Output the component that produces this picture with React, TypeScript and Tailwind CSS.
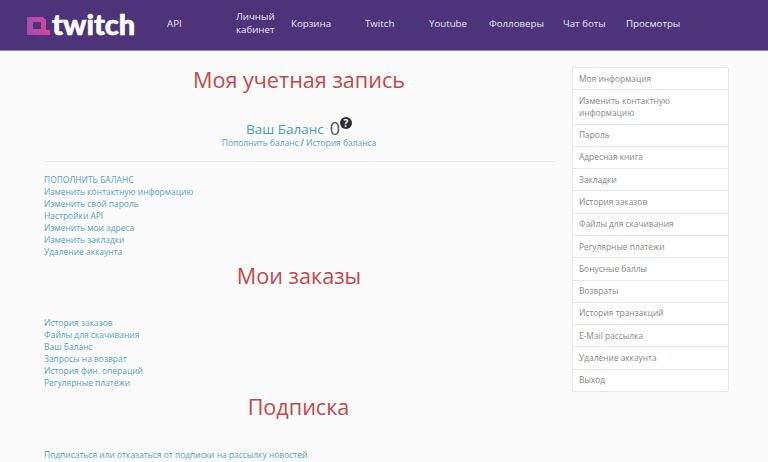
const OPEN = "font-['Open_Sans',sans-serif]";

const nav = [
  { t: 'API', w: 'w-[69px]' },
  { t: 'Личный кабинет', w: 'w-[55px]' },
  { t: 'Корзина', w: 'w-[74px]' },
  { t: 'Twitch', w: 'w-[64px]' },
  { t: 'Youtube', w: 'w-[60px]' },
  { t: 'Фолловеры', w: 'w-[74px]' },
  { t: 'Чат боты', w: 'w-[63px]' },
  { t: 'Просмотры', w: 'w-[64px]' },
];

const side = [
  'Моя информация',
  'Изменить контактную информацию',
  'Пароль',
  'Адресная книга',
  'Закладки',
  'История заказов',
  'Файлы для скачивания',
  'Регулярные платежи',
  'Бонусные баллы',
  'Возвраты',
  'История транзакций',
  'E-Mail рассылка',
  'Удаление аккаунта',
  'Выход',
];

const links1 = ['ПОПОЛНИТЬ БАЛАНС', 'Изменить контактную информацию', 'Изменить свой пароль', 'Настройки API', 'Изменить мои адреса', 'Изменить закладки', 'Удаление аккаунта'];
const links2 = ['История заказов', 'Файлы для скачивания', 'Ваш Баланс', 'Запросы на возврат', 'История фин. операций', 'Регулярные платежи'];

function Logo() {
  return (
    <svg width="26" height="30" viewBox="0 0 26 30" className="block">
      <defs>
        <linearGradient id="lg" x1="0" x2="1" y1="0" y2="0">
          <stop offset="0" stopColor="#a04fb0" />
          <stop offset="1" stopColor="#e0409a" />
        </linearGradient>
      </defs>
      <path fillRule="evenodd" d="M2 7h16l3 3v10h4v5H2zM8 12v7h8v-7z" fill="url(#lg)" />
    </svg>
  );
}

function Links({ items }: { items: string[] }) {
  return (
    <ul className="text-[8.45px] leading-[12px] text-[#55a3c0]">
      {items.map((l) => (
        <li key={l}>{l}</li>
      ))}
    </ul>
  );
}

export default function App() {
  return (
    <div className={`h-[462px] w-[768px] overflow-hidden bg-[#fbfbfb] ${OPEN}`}>
      <header className="flex h-[51px] items-center border-b border-[#8f82a8] bg-[#4c337a]">
        <div className="ml-[25px] flex w-[142px] shrink-0 items-center">
          <Logo />
          <span className="ml-[1px] pb-[2px] font-['Lato',sans-serif] text-[29px] font-black leading-[30px] text-white [-webkit-text-stroke:0.6px_white]">twitch</span>
        </div>
        <nav className="flex items-center pb-[4px] text-[9.7px] leading-[13px] text-[#ebe6f2]">
          {nav.map((n) => (
            <div key={n.t} className={`${n.w} shrink-0`}>{n.t}</div>
          ))}
        </nav>
      </header>
      <div className="flex">
        <main className="ml-[44px] w-[512px] shrink-0">
          <h1 className="mt-[14px] pr-[2px] text-center text-[21.6px] leading-[30px] text-[#c2494b]">Моя учетная запись</h1>
          <div className="mt-[20px] flex h-[22px] items-start justify-center pr-[2px]">
            <span className="mt-[5px] text-[13.5px] leading-[18px] text-[#4a9bb8]">Ваш Баланс</span>
            <span className="mt-[10px] ml-[2px] mr-[2px] text-[6px] leading-[6px] text-[#4a9bb8]">-</span>
            <span className="mt-[4px] text-[18px] leading-[18px] text-[#555]">0</span>
            <span className="mt-[2px] flex h-[12px] w-[12px] items-center justify-center rounded-full bg-[#2f2f2f] text-[10px] font-bold leading-none text-white">?</span>
          </div>
          <div className="pr-[2px] text-center text-[8.45px] leading-[12px] text-[#55a3c0]">Пополнить баланс <span className="text-[#555]">/</span> История баланса</div>
          <hr className="mt-[12px] border-[#eeeeee]" />
          <div className="mt-[12px]"><Links items={links1} /></div>
          <h2 className="mt-[3px] pr-[2px] text-center text-[21.6px] leading-[30px] text-[#c2494b]">Мои заказы</h2>
          <div className="mt-[26px]"><Links items={links2} /></div>
          <h2 className="mt-[3px] pr-[3px] text-center text-[21.6px] leading-[30px] text-[#c2494b]">Подписка</h2>
          <div className="mt-[27px]"><Links items={['Подписаться или отказаться от подписки на рассылку новостей']} /></div>
        </main>
        <aside className="ml-[16px] mt-[16px] w-[157px] shrink-0 self-start rounded-[2px] border border-[#e6e6e6] bg-white text-[8.4px] leading-[12px] text-[#888]">
          {side.map((s, i) => (
            <div key={s} className={`px-[6px] py-[4.65px] ${i > 0 ? 'border-t border-[#e6e6e6]' : ''}`}>{s}</div>
          ))}
        </aside>
      </div>
    </div>
  );
}
